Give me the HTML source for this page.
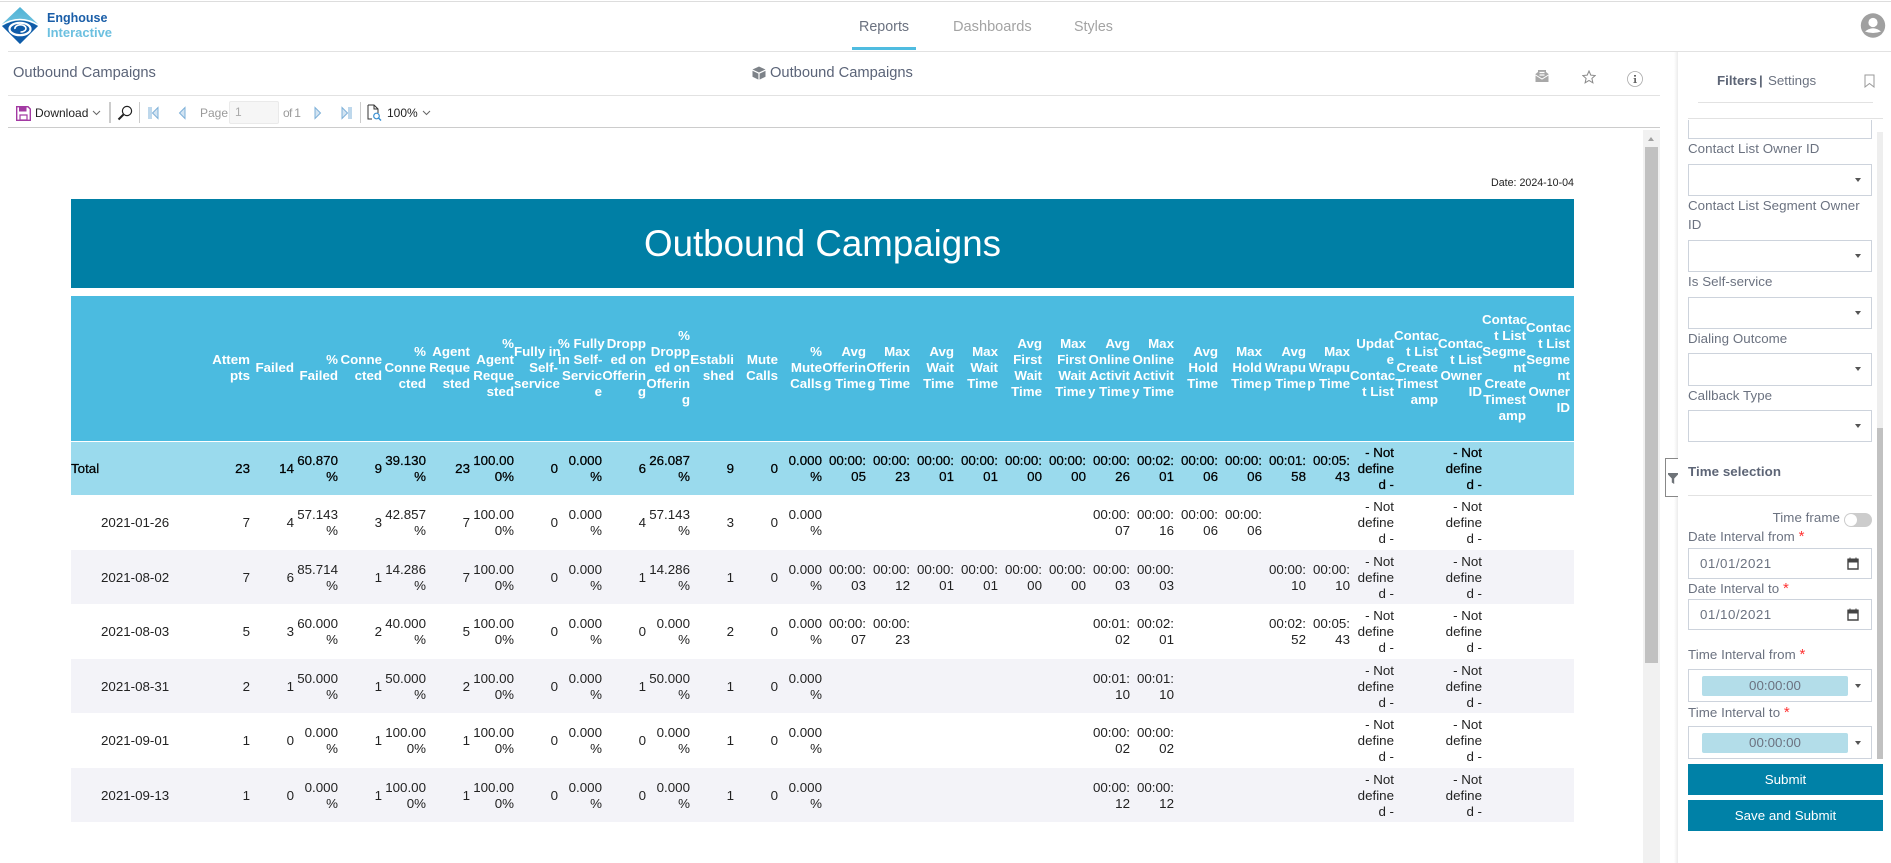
<!DOCTYPE html>
<html lang="en"><head><meta charset="utf-8"><title>Outbound Campaigns</title>
<style>
*{box-sizing:border-box}
html,body{margin:0;padding:0;width:1891px;height:863px;overflow:hidden;background:#fff}
body{position:relative;font-family:"Liberation Sans",Arial,sans-serif;font-size:13.33px;color:#222}
.a{position:absolute;white-space:nowrap}
.ln{position:absolute;height:1px;background:#e2e2e2}
table{position:absolute;left:71px;top:296px;width:1503px;table-layout:fixed;border-collapse:collapse;border-spacing:0}
td{padding:0;text-align:right;vertical-align:middle;white-space:nowrap;line-height:16px;overflow:visible}
.h td{background:#4bbbe0;color:#fff;font-weight:bold;height:145px;border-bottom:1px solid #fff}
.t td{background:#9adaed;color:#000;height:54px;padding-top:1px;-webkit-text-stroke:.25px #000}
.t td:first-child{text-align:left}
.o td{height:55px;padding-top:1px}.e td{height:54px;padding-top:1px;background:#f3f3f8}
.o td:first-child,.e td:first-child{text-align:left;padding-left:30px}
.lb{position:absolute;left:1688px;height:20px;line-height:20px;color:#6b7280;font-size:13.33px;letter-spacing:.05px;white-space:nowrap}
.lb i{color:#f33;font-style:normal;font-size:15px}
.in{position:absolute;left:1688px;width:184px;background:#fff;border:1px solid #cdd3dc}
.car{position:absolute;left:1855px;width:0;height:0;border-left:3.5px solid transparent;border-right:3.5px solid transparent;border-top:4px solid #555}
.tv{position:absolute;left:1702px;width:146px;height:20px;background:#b3dde9;border-radius:2px;text-align:center;line-height:20px;color:#6b7280}
.btn{position:absolute;left:1688px;width:195px;height:31px;background:#0081a7;color:#fff;text-align:center;line-height:31px;font-size:13.33px}
</style></head><body>

<div class="ln" style="left:0;top:1px;width:1891px;height:1px;background:#ddd"></div>
<svg class="a" style="left:0;top:6px" width="40" height="40" viewBox="0 0 40 40">
<defs><linearGradient id="lg" x1="0" y1="0" x2="0" y2="1"><stop offset="0" stop-color="#4fb3d6"/><stop offset="1" stop-color="#8fd0e6"/></linearGradient></defs>
<polygon points="20,1 39,19 20,38 1,19" fill="url(#lg)"/>
<path d="M2,20 Q20,9 38,20 L20,38 Z" fill="#0f5ba8"/>
<path d="M1,19.5 Q20,7.5 39,19.5" fill="none" stroke="#fff" stroke-width="1.5"/>
<ellipse cx="20" cy="23" rx="10.5" ry="6.2" fill="none" stroke="#fff" stroke-width="2.2"/>
<path d="M15,23 a5.5,3.6 0 1 1 5.5,3" fill="none" stroke="#fff" stroke-width="1.6"/>
</svg>
<div class="a" style="left:47px;top:10px;line-height:16px;font-size:12.5px;font-weight:bold;color:#1a5ea8">Enghouse</div>
<div class="a" style="left:47px;top:25px;line-height:16px;font-size:13px;font-weight:bold;color:#6cc0e0">Interactive</div>

<div class="a" style="left:859px;top:17px;line-height:20px;font-size:14.3px;color:#6b7280">Reports</div>
<div class="a" style="left:953px;top:17px;line-height:20px;font-size:14.6px;color:#a3a3a3">Dashboards</div>
<div class="a" style="left:1074px;top:17px;line-height:20px;font-size:14.3px;color:#a3a3a3">Styles</div>
<div class="a" style="left:852px;top:47px;width:64px;height:3px;background:#4fbce0"></div>
<svg class="a" style="left:1860px;top:13px" width="26" height="25" viewBox="0 0 26 25"><circle cx="13" cy="12.5" r="12.2" fill="#a0a0a0"/><circle cx="13" cy="9.5" r="4.6" fill="#fff"/><path d="M5,18.5 Q13,12 21,18.5 Q13,21.5 5,18.5Z" fill="#fff"/></svg>
<div class="ln" style="left:8px;top:51px;width:1883px"></div>

<div class="a" style="left:13px;top:63px;line-height:20px;font-size:14.7px;color:#5b6478">Outbound Campaigns</div>
<svg class="a" style="left:752px;top:66px" width="14" height="14" viewBox="0 0 14 14"><path d="M7,.5 13.5,3.5 7,6.5 .5,3.5Z M.5,4.8 6.4,7.6V13.6L.5,10.7Z M13.5,4.8 7.6,7.6V13.6L13.5,10.7Z" fill="#7d8288"/></svg>
<div class="a" style="left:770px;top:63px;line-height:20px;font-size:14.7px;color:#5b6478">Outbound Campaigns</div>
<svg class="a" style="left:1535px;top:69px" width="14" height="14" viewBox="0 0 14 14"><path d="M.5,5 3,3V1H11V3L13.5,5V13H.5Z" fill="#a8a8a8"/><path d="M4.5,3.5H9.5M4.5,6H9.5" stroke="#fff" stroke-width="1.2"/><path d="M.5,6 7,10 13.5,6" stroke="#fff" stroke-width="1" fill="none"/></svg>
<svg class="a" style="left:1582px;top:70px" width="14" height="14" viewBox="0 0 14 14"><path d="M7,1 8.8,5.1 13.2,5.5 9.9,8.4 10.9,12.8 7,10.5 3.1,12.8 4.1,8.4 .8,5.5 5.2,5.1Z" fill="none" stroke="#8a8a8a" stroke-width="1"/></svg>
<svg class="a" style="left:1627px;top:71px" width="16" height="16" viewBox="0 0 16 16"><circle cx="8" cy="8" r="7.5" fill="none" stroke="#aaa" stroke-width=".8"/><path d="M7,4h2v1.6H7ZM6.6,7H9v4.2h.8V12H6.4v-.8h.9V7.8h-.7Z" fill="#666"/></svg>
<div class="ln" style="left:8px;top:95px;width:1652px"></div>

<svg class="a" style="left:16px;top:106px" width="15" height="15" viewBox="0 0 15 15"><path d="M.7,.7H12L14.3,3V14.3H.7Z" fill="#fff" stroke="#a33aa3" stroke-width="1.4"/><path d="M3,1H10.5V5.5H3Z" fill="#a33aa3"/><path d="M4,9H11V14H4Z" fill="none" stroke="#a33aa3" stroke-width="1.2"/></svg>
<div class="a" style="left:35px;top:103px;line-height:20px;font-size:12px;color:#222">Download</div>
<svg class="a" style="left:92px;top:110px" width="9" height="6" viewBox="0 0 9 6"><path d="M1,1 4.5,4.5 8,1" fill="none" stroke="#666" stroke-width="1"/></svg>
<div class="a" style="left:109px;top:102px;width:2px;height:21px;background:#ccc"></div>
<svg class="a" style="left:117px;top:105px" width="16" height="16" viewBox="0 0 16 16"><circle cx="10" cy="6" r="4.6" fill="none" stroke="#222" stroke-width="1.2"/><path d="M6.5,9.5 1.5,14.5" stroke="#222" stroke-width="2"/></svg>
<div class="a" style="left:139px;top:102px;width:1px;height:21px;background:#ccc"></div>
<svg class="a" style="left:148px;top:106px" width="11" height="14" viewBox="0 0 11 14"><path d="M1,1V13M3,1V13" stroke="#7eb0d8" stroke-width="1"/><path d="M10,1.5 4.5,7 10,12.5Z" fill="#d3e4f2" stroke="#7eb0d8"/></svg>
<svg class="a" style="left:178px;top:106px" width="8" height="14" viewBox="0 0 8 14"><path d="M7,1.5 1.5,7 7,12.5Z" fill="#d3e4f2" stroke="#7eb0d8"/></svg>
<div class="a" style="left:200px;top:103px;line-height:20px;font-size:12px;color:#9a9a9a">Page</div>
<div class="a" style="left:229px;top:101px;width:50px;height:23px;background:#f6f6f6;border:1px solid #eaeaea;border-radius:2px;line-height:20px;padding-left:5px;font-size:12px;color:#aaa">1</div>
<div class="a" style="left:283px;top:103px;line-height:20px;font-size:12px;letter-spacing:-.7px;color:#9a9a9a">of 1</div>
<svg class="a" style="left:314px;top:106px" width="8" height="14" viewBox="0 0 8 14"><path d="M1,1.5 6.5,7 1,12.5Z" fill="#d3e4f2" stroke="#7eb0d8"/></svg>
<svg class="a" style="left:341px;top:106px" width="11" height="14" viewBox="0 0 11 14"><path d="M8,1V13M10,1V13" stroke="#7eb0d8" stroke-width="1"/><path d="M1,1.5 6.5,7 1,12.5Z" fill="#d3e4f2" stroke="#7eb0d8"/></svg>
<div class="a" style="left:360px;top:102px;width:1px;height:21px;background:#ccc"></div>
<svg class="a" style="left:367px;top:104px" width="15" height="18" viewBox="0 0 15 18"><path d="M1,1H7L11,5V9M1,1V15H5M7,1V5H11" fill="none" stroke="#333" stroke-width="1"/><circle cx="9.5" cy="12" r="2.8" fill="none" stroke="#3a8fd0" stroke-width="1.2"/><path d="M11.5,14 14,16.5" stroke="#3a8fd0" stroke-width="1.4"/></svg>
<div class="a" style="left:387px;top:103px;line-height:20px;font-size:12px;color:#222">100%</div>
<svg class="a" style="left:422px;top:110px" width="9" height="6" viewBox="0 0 9 6"><path d="M1,1 4.5,4.5 8,1" fill="none" stroke="#666" stroke-width="1"/></svg>
<div class="ln" style="left:8px;top:127px;width:1652px;background:#ccc"></div>

<div class="a" style="left:1643px;top:130px;width:17px;height:733px;background:#f1f1f1"></div>
<div class="a" style="left:1645px;top:147px;width:13px;height:516px;background:#c1c1c1"></div>
<div class="a" style="left:1648px;top:137px;width:0;height:0;border-left:3.5px solid transparent;border-right:3.5px solid transparent;border-bottom:4px solid #a0a0a0"></div>

<div class="a" style="right:317px;top:175px;line-height:16px;font-size:10.67px;color:#222">Date: 2024-10-04</div>
<div class="a" style="left:71px;top:199px;width:1503px;height:89px;background:#007fa5;color:#fff;text-align:center;line-height:89px;font-size:36.7px">Outbound Campaigns</div>

<table>
<colgroup><col style="width:135px"><col span="31" style="width:44px"><col style="width:4px"></colgroup>
<tr class="h"><td></td><td>Attem<br>pts</td><td>Failed</td><td>%<br>Failed</td><td>Conne<br>cted</td><td>%<br>Conne<br>cted</td><td>Agent<br>Reque<br>sted</td><td>%<br>Agent<br>Reque<br>sted</td><td>Fully in<br>Self-<br>service</td><td>% Fully<br>in Self-<br>Servic<br>e</td><td>Dropp<br>ed on<br>Offerin<br>g</td><td>%<br>Dropp<br>ed on<br>Offerin<br>g</td><td>Establi<br>shed</td><td>Mute<br>Calls</td><td>%<br>Mute<br>Calls</td><td>Avg<br>Offerin<br>g Time</td><td>Max<br>Offerin<br>g Time</td><td>Avg<br>Wait<br>Time</td><td>Max<br>Wait<br>Time</td><td>Avg<br>First<br>Wait<br>Time</td><td>Max<br>First<br>Wait<br>Time</td><td>Avg<br>Online<br>Activit<br>y Time</td><td>Max<br>Online<br>Activit<br>y Time</td><td>Avg<br>Hold<br>Time</td><td>Max<br>Hold<br>Time</td><td>Avg<br>Wrapu<br>p Time</td><td>Max<br>Wrapu<br>p Time</td><td>Updat<br>e<br>Contac<br>t List</td><td>Contac<br>t List<br>Create<br>Timest<br>amp</td><td>Contac<br>t List<br>Owner<br>ID</td><td>Contac<br>t List<br>Segme<br>nt<br>Create<br>Timest<br>amp</td><td>Contac<br>t List<br>Segme<br>nt<br>Owner<br>ID</td><td></td></tr>
<tr class="t"><td>Total</td><td>23</td><td>14</td><td>60.870<br>%</td><td>9</td><td>39.130<br>%</td><td>23</td><td>100.00<br>0%</td><td>0</td><td>0.000<br>%</td><td>6</td><td>26.087<br>%</td><td>9</td><td>0</td><td>0.000<br>%</td><td>00:00:<br>05</td><td>00:00:<br>23</td><td>00:00:<br>01</td><td>00:00:<br>01</td><td>00:00:<br>00</td><td>00:00:<br>00</td><td>00:00:<br>26</td><td>00:02:<br>01</td><td>00:00:<br>06</td><td>00:00:<br>06</td><td>00:01:<br>58</td><td>00:05:<br>43</td><td>- Not<br>define<br>d -</td><td></td><td>- Not<br>define<br>d -</td><td></td><td></td><td></td></tr>
<tr class="o"><td>2021-01-26</td><td>7</td><td>4</td><td>57.143<br>%</td><td>3</td><td>42.857<br>%</td><td>7</td><td>100.00<br>0%</td><td>0</td><td>0.000<br>%</td><td>4</td><td>57.143<br>%</td><td>3</td><td>0</td><td>0.000<br>%</td><td></td><td></td><td></td><td></td><td></td><td></td><td>00:00:<br>07</td><td>00:00:<br>16</td><td>00:00:<br>06</td><td>00:00:<br>06</td><td></td><td></td><td>- Not<br>define<br>d -</td><td></td><td>- Not<br>define<br>d -</td><td></td><td></td><td></td></tr>
<tr class="e"><td>2021-08-02</td><td>7</td><td>6</td><td>85.714<br>%</td><td>1</td><td>14.286<br>%</td><td>7</td><td>100.00<br>0%</td><td>0</td><td>0.000<br>%</td><td>1</td><td>14.286<br>%</td><td>1</td><td>0</td><td>0.000<br>%</td><td>00:00:<br>03</td><td>00:00:<br>12</td><td>00:00:<br>01</td><td>00:00:<br>01</td><td>00:00:<br>00</td><td>00:00:<br>00</td><td>00:00:<br>03</td><td>00:00:<br>03</td><td></td><td></td><td>00:00:<br>10</td><td>00:00:<br>10</td><td>- Not<br>define<br>d -</td><td></td><td>- Not<br>define<br>d -</td><td></td><td></td><td></td></tr>
<tr class="o"><td>2021-08-03</td><td>5</td><td>3</td><td>60.000<br>%</td><td>2</td><td>40.000<br>%</td><td>5</td><td>100.00<br>0%</td><td>0</td><td>0.000<br>%</td><td>0</td><td>0.000<br>%</td><td>2</td><td>0</td><td>0.000<br>%</td><td>00:00:<br>07</td><td>00:00:<br>23</td><td></td><td></td><td></td><td></td><td>00:01:<br>02</td><td>00:02:<br>01</td><td></td><td></td><td>00:02:<br>52</td><td>00:05:<br>43</td><td>- Not<br>define<br>d -</td><td></td><td>- Not<br>define<br>d -</td><td></td><td></td><td></td></tr>
<tr class="e"><td>2021-08-31</td><td>2</td><td>1</td><td>50.000<br>%</td><td>1</td><td>50.000<br>%</td><td>2</td><td>100.00<br>0%</td><td>0</td><td>0.000<br>%</td><td>1</td><td>50.000<br>%</td><td>1</td><td>0</td><td>0.000<br>%</td><td></td><td></td><td></td><td></td><td></td><td></td><td>00:01:<br>10</td><td>00:01:<br>10</td><td></td><td></td><td></td><td></td><td>- Not<br>define<br>d -</td><td></td><td>- Not<br>define<br>d -</td><td></td><td></td><td></td></tr>
<tr class="o"><td>2021-09-01</td><td>1</td><td>0</td><td>0.000<br>%</td><td>1</td><td>100.00<br>0%</td><td>1</td><td>100.00<br>0%</td><td>0</td><td>0.000<br>%</td><td>0</td><td>0.000<br>%</td><td>1</td><td>0</td><td>0.000<br>%</td><td></td><td></td><td></td><td></td><td></td><td></td><td>00:00:<br>02</td><td>00:00:<br>02</td><td></td><td></td><td></td><td></td><td>- Not<br>define<br>d -</td><td></td><td>- Not<br>define<br>d -</td><td></td><td></td><td></td></tr>
<tr class="e"><td>2021-09-13</td><td>1</td><td>0</td><td>0.000<br>%</td><td>1</td><td>100.00<br>0%</td><td>1</td><td>100.00<br>0%</td><td>0</td><td>0.000<br>%</td><td>0</td><td>0.000<br>%</td><td>1</td><td>0</td><td>0.000<br>%</td><td></td><td></td><td></td><td></td><td></td><td></td><td>00:00:<br>12</td><td>00:00:<br>12</td><td></td><td></td><td></td><td></td><td>- Not<br>define<br>d -</td><td></td><td>- Not<br>define<br>d -</td><td></td><td></td><td></td></tr>
</table>

<div class="a" style="left:1674px;top:52px;width:4px;height:811px;background:linear-gradient(to right,#fff,#ececec)"></div>
<div class="a" style="left:1665px;top:458px;width:13px;height:39px;border:1px solid #888;border-right:none;background:#fff"></div>
<svg class="a" style="left:1668px;top:473px" width="10" height="11" viewBox="0 0 10 11"><path d="M0,0H10V1.5L6.2,5.5V11L3.8,9.5V5.5L0,1.5Z" fill="#6e7378"/></svg>
<div class="a" style="left:1678px;top:52px;width:213px;height:811px;background:#fff"></div>

<div class="a" style="left:1717px;top:71px;line-height:20px;font-size:13.33px;font-weight:bold;color:#5d6576">Filters</div>
<div class="a" style="left:1759px;top:71px;line-height:20px;font-size:13.33px;font-weight:bold;color:#5d6576">|</div>
<div class="a" style="left:1768px;top:71px;line-height:20px;font-size:13.33px;color:#6b7280">Settings</div>
<svg class="a" style="left:1864px;top:74px" width="11" height="14" viewBox="0 0 11 14"><path d="M1,1H10V13L5.5,9.5 1,13Z" fill="none" stroke="#9a9a9a" stroke-width="1"/></svg>
<div class="ln" style="left:1698px;top:102px;width:175px"></div>
<div class="ln" style="left:1688px;top:118px;width:195px"></div>

<div class="a" style="left:1877px;top:132px;width:6px;height:627px;background:#eee"></div>
<div class="a" style="left:1877px;top:428px;width:6px;height:331px;background:#c1c1c1"></div>

<div class="in" style="top:120px;height:19px;border-top:none"></div>
<div class="lb" style="top:139px">Contact List Owner ID</div>
<div class="in" style="top:164px;height:32px"></div><div class="car" style="top:178px"></div>
<div class="lb" style="top:196px">Contact List Segment Owner</div>
<div class="lb" style="top:215px">ID</div>
<div class="in" style="top:240px;height:32px"></div><div class="car" style="top:254px"></div>
<div class="lb" style="top:272px">Is Self-service</div>
<div class="in" style="top:297px;height:32px"></div><div class="car" style="top:311px"></div>
<div class="lb" style="top:329px">Dialing Outcome</div>
<div class="in" style="top:353px;height:33px"></div><div class="car" style="top:367px"></div>
<div class="lb" style="top:386px">Callback Type</div>
<div class="in" style="top:410px;height:32px"></div><div class="car" style="top:424px"></div>
<div class="lb" style="top:462px;font-weight:bold;color:#5d6576">Time selection</div>
<div class="ln" style="left:1688px;top:495px;width:184px"></div>
<div class="lb" style="top:508px;left:auto;right:51px">Time frame</div>
<div class="a" style="left:1844px;top:513px;width:28px;height:14px;border-radius:7px;background:#ccc"></div>
<div class="a" style="left:1845px;top:514px;width:12px;height:12px;border-radius:6px;background:#fff"></div>
<div class="lb" style="top:527px">Date Interval from <i>*</i></div>
<div class="in" style="top:548px;height:31px;line-height:29px;padding-left:11px;color:#6b7280;letter-spacing:.5px">01/01/2021</div>
<svg class="a" style="left:1847px;top:557px" width="12" height="13" viewBox="0 0 12 13"><path d="M1,2.5H11V12H1Z" fill="none" stroke="#444" stroke-width="1.4"/><path d="M1,2H11V5H1ZM3,.5V2M9,.5V2" fill="#444" stroke="#444"/></svg>
<div class="lb" style="top:579px">Date Interval to <i>*</i></div>
<div class="in" style="top:599px;height:31px;line-height:29px;padding-left:11px;color:#6b7280;letter-spacing:.5px">01/10/2021</div>
<svg class="a" style="left:1847px;top:608px" width="12" height="13" viewBox="0 0 12 13"><path d="M1,2.5H11V12H1Z" fill="none" stroke="#444" stroke-width="1.4"/><path d="M1,2H11V5H1ZM3,.5V2M9,.5V2" fill="#444" stroke="#444"/></svg>
<div class="lb" style="top:645px">Time Interval from <i>*</i></div>
<div class="in" style="top:669px;height:33px"></div><div class="tv" style="top:676px">00:00:00</div><div class="car" style="top:684px"></div>
<div class="lb" style="top:703px">Time Interval to <i>*</i></div>
<div class="in" style="top:726px;height:33px"></div><div class="tv" style="top:733px">00:00:00</div><div class="car" style="top:741px"></div>
<div class="btn" style="top:764px">Submit</div>
<div class="btn" style="top:800px">Save and Submit</div>
</body></html>
